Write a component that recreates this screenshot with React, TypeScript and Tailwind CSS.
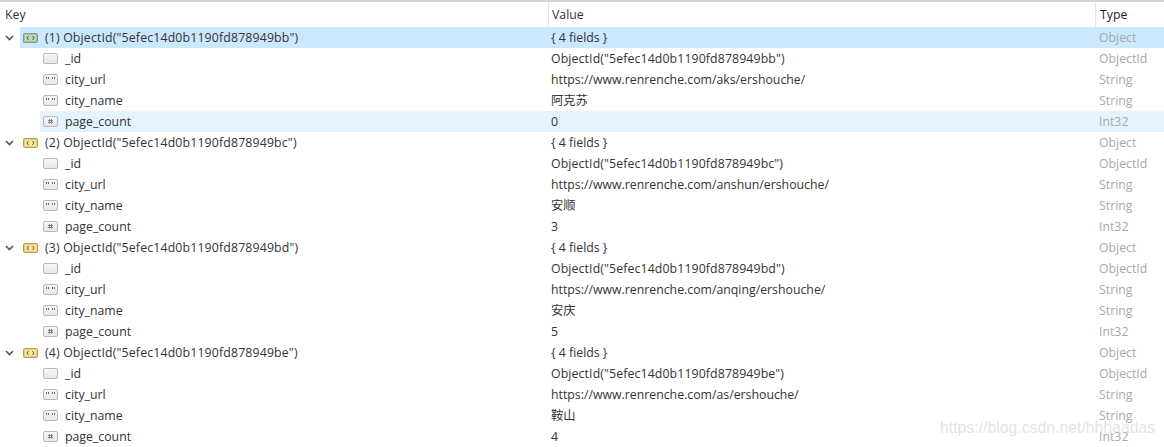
const FONT = "font-['Open_Sans','Noto_Sans_CJK_SC',sans-serif]";

const DOCS = [
  { n: 1, id: "5efec14d0b1190fd878949bb", url: "https://www.renrenche.com/aks/ershouche/", city: "阿克苏", count: "0" },
  { n: 2, id: "5efec14d0b1190fd878949bc", url: "https://www.renrenche.com/anshun/ershouche/", city: "安顺", count: "3" },
  { n: 3, id: "5efec14d0b1190fd878949bd", url: "https://www.renrenche.com/anqing/ershouche/", city: "安庆", count: "5" },
  { n: 4, id: "5efec14d0b1190fd878949be", url: "https://www.renrenche.com/as/ershouche/", city: "鞍山", count: "4" },
];

function DocIcon({ green }: { green?: boolean }) {
  return (
    <svg width="15" height="10" viewBox="0 0 15 10" className="shrink-0">
      <rect x="0.5" y="0.5" width="14" height="9" rx="1" fill={green ? "#a4c4a0" : "#e6cf78"} stroke={green ? "#7f9a8c" : "#b89f52"} />
      <rect x="2" y="2" width="11" height="6" fill={green ? "#bcd6b8" : "#f4e5a0"} />
      <path d="M5.5 3 L4 5 L5.5 7 M9.5 3 L11 5 L9.5 7" fill="none" stroke="#4f5f48" strokeWidth="1" />
    </svg>
  );
}

function FieldIcon({ kind }: { kind: "id" | "str" | "num" }) {
  return (
    <svg width="15" height="11" viewBox="0 0 15 11" className="shrink-0">
      <defs>
        <linearGradient id="field-fill" x1="0" y1="0" x2="0" y2="1">
          <stop offset="0" stopColor="#f8f8f8" />
          <stop offset="1" stopColor="#e6e6e6" />
        </linearGradient>
      </defs>
      <rect x="0.5" y="0.5" width="14" height="10" rx="1.5" fill="url(#field-fill)" stroke="#b8b8b8" />
      {kind === "str" && <path d="M3.5 3v2M5.5 3v2M9.5 3v2M11.5 3v2" stroke="#6a6a6a" strokeWidth="1" />}
      {kind === "num" && <path d="M6.5 3v4.5M8.5 3v4.5M5 4.5h5M5 6.5h5" stroke="#777" strokeWidth="0.9" />}
    </svg>
  );
}

function Chevron() {
  return (
    <svg width="9" height="6" viewBox="0 0 9 6" className="shrink-0">
      <path d="M1 1 L4.5 4.5 L8 1" fill="none" stroke="#555" strokeWidth="1.6" />
    </svg>
  );
}

function Cells({ value, type, wide }: { value: string; type: string; wide?: boolean }) {
  return (
    <>
      <div className={`w-[546px] shrink-0 pl-[2px] text-[#333] whitespace-nowrap ${wide ? "tracking-[0.12px]" : ""}`}>{value}</div>
      <div className="flex-1 pl-[4px] text-[#a9a9a9]">{type}</div>
    </>
  );
}

function FieldRow({ icon, name, value, type, hover, wide }: { icon: "id" | "str" | "num"; name: string; value: string; type: string; hover?: boolean; wide?: boolean }) {
  return (
    <div className="flex h-[21px] items-center">
      <div className="w-[40px] shrink-0" />
      <div className={`flex h-full flex-1 items-center ${hover ? "bg-[#e5f3ff]" : ""}`}>
        <div className="flex w-[509px] shrink-0 items-center gap-[7px] pl-[3px] text-[#333]">
          <FieldIcon kind={icon} />
          <span>{name}</span>
        </div>
        <Cells value={value} type={type} wide={wide} />
      </div>
    </div>
  );
}

export default function App() {
  return (
    <div className={`relative h-[447px] w-[1164px] overflow-hidden bg-white text-[12.3px] leading-[21px] ${FONT}`}>
      {/* Header */}
      <div className="flex h-[27px] items-center border-t-2 border-[#d4d4d4] text-[#333]">
        <div className="w-[548px] shrink-0 pl-[5px]">Key</div>
        <div className="h-full w-[547px] shrink-0 border-l border-[#e5e5e5] pl-[3px] leading-[25px]">Value</div>
        <div className="h-full flex-1 border-l border-[#e5e5e5] pl-[4px] leading-[25px] text-[#222]">Type</div>
      </div>

      {DOCS.map((d, i) => (
        <div key={d.n}>
          <div className="flex h-[21px] items-center">
            <div className="flex w-[20px] shrink-0 justify-end pr-[6px]">
              <Chevron />
            </div>
            <div className={`flex h-full flex-1 items-center ${i === 0 ? "bg-[#cce8ff]" : ""}`}>
              <div className="flex w-[529px] shrink-0 items-center gap-[7px] pl-[3px] text-[#333] whitespace-nowrap">
                <DocIcon green={i === 0} />
                <span className="tracking-[0.16px]">({d.n}) ObjectId("{d.id}")</span>
              </div>
              <Cells value="{ 4 fields }" type="Object" />
            </div>
          </div>
          <FieldRow icon="id" name="_id" value={`ObjectId("${d.id}")`} type="ObjectId" wide />
          <FieldRow icon="str" name="city_url" value={d.url} type="String" />
          <FieldRow icon="str" name="city_name" value={d.city} type="String" />
          <FieldRow icon="num" name="page_count" value={d.count} type="Int32" hover={i === 0} />
        </div>
      ))}

      {/* Watermark */}
      <div className="absolute left-[940px] top-[417px] font-['Liberation_Sans',sans-serif] text-[15.8px] leading-[22px] text-[#c8c8c8]/50 whitespace-nowrap">
        https://blog.csdn.net/hhhaadas
      </div>
    </div>
  );
}
